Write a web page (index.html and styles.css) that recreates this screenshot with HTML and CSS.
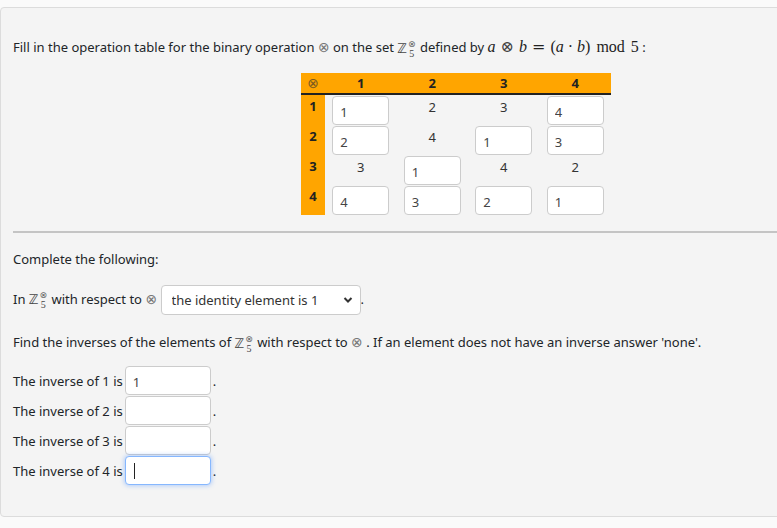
FILE: index.html
```html
<!DOCTYPE html>
<html lang="en">
<head>
    <meta charset="UTF-8">
    <title>Operation table</title>
    <link rel="stylesheet" href="styles.css">
</head>
<body>
    <div class="question">
        <p class="intro">
            Fill in the operation table for the binary operation <span class="op">&#8855;</span> on the set
            <span class="math set">&#8484;<span class="scripts"><span class="sup">&#8855;</span><span class="sub">5</span></span></span>
            defined by
            <span class="math"><i>a</i> <span class="mop">&#8855;</span> <i>b</i> <span class="mrel">=</span> (<i>a</i> <span class="mdot">&middot;</span> <i>b</i>) <span class="mod">mod</span> 5</span> :
        </p>

        <table class="optable">
            <thead>
                <tr>
                    <th class="corner">&#8855;</th>
                    <th>1</th>
                    <th>2</th>
                    <th>3</th>
                    <th>4</th>
                </tr>
            </thead>
            <tbody>
                <tr>
                    <th>1</th>
                    <td><input class="cell-input" value="1"></td>
                    <td>2</td>
                    <td>3</td>
                    <td><input class="cell-input" value="4"></td>
                </tr>
                <tr>
                    <th>2</th>
                    <td><input class="cell-input" value="2"></td>
                    <td>4</td>
                    <td><input class="cell-input" value="1"></td>
                    <td><input class="cell-input" value="3"></td>
                </tr>
                <tr>
                    <th>3</th>
                    <td>3</td>
                    <td><input class="cell-input" value="1"></td>
                    <td>4</td>
                    <td>2</td>
                </tr>
                <tr>
                    <th>4</th>
                    <td><input class="cell-input" value="4"></td>
                    <td><input class="cell-input" value="3"></td>
                    <td><input class="cell-input" value="2"></td>
                    <td><input class="cell-input" value="1"></td>
                </tr>
            </tbody>
        </table>

        <hr class="divider">

        <p class="line">Complete the following:</p>

        <p class="identity">In <span class="math set">&#8484;<span class="scripts"><span class="sup">&#8855;</span><span class="sub">5</span></span></span> with respect to <span class="op">&#8855;</span> <span class="select-wrap"><select class="choice"><option>the identity element is 1</option></select><svg class="chevron" width="10" height="8" viewBox="0 0 10 8"><path d="M1.5 2 L5 5.5 L8.5 2" fill="none" stroke="#333" stroke-width="2"/></svg></span>.</p>

        <p class="line find">
            Find the inverses of the elements of
            <span class="math set">&#8484;<span class="scripts"><span class="sup">&#8855;</span><span class="sub">5</span></span></span>
            with respect to <span class="op">&#8855;</span> . If an element does not have an inverse answer 'none'.
        </p>

        <div class="inverses">
            <div class="inv-row">The inverse of 1 is <input class="inv-input" value="1">.</div>
            <div class="inv-row">The inverse of 2 is <input class="inv-input">.</div>
            <div class="inv-row">The inverse of 3 is <input class="inv-input">.</div>
            <div class="inv-row">The inverse of 4 is <span class="focus-wrap"><input class="inv-input focused"><span class="caret"></span></span>.</div>
        </div>
    </div>
</body>
</html>
```

FILE: styles.css
```css
html, body {
    margin: 0;
    overflow: hidden;
}

body {
    background-color: #fafafa;
    font-family: 'Noto Sans', 'Open Sans', sans-serif;
    font-size: 13px;
    color: #212529;
}

.question {
    width: 790px;
    margin-top: 7px;
    padding: 27px 12px 20px 12px;
    background-color: #f4f4f4;
    border: 1px solid #dcdcdc;
    border-radius: 4px;
    box-sizing: border-box;
    height: 510px;
}

p {
    margin: 0;
}

.intro {
    line-height: 24px;
}

.op {
    font-family: 'DejaVu Sans', sans-serif;
    font-size: 14px;
    color: #777;
}

.math {
    font-family: 'Liberation Serif', 'DejaVu Serif', serif;
    font-size: 16px;
    color: #222;
}

.math i {
    font-style: italic;
}

.mop, .mrel {
    font-family: 'DejaVu Serif', serif;
    font-size: 16px;
    margin: 0 1px;
}

.mop {
    color: #444;
}

.mod {
    margin: 0 2px;
}

.set {
    display: inline-flex;
    align-items: center;
    font-family: 'DejaVu Sans', sans-serif;
    font-size: 13px;
    color: #444;
    vertical-align: middle;
    margin-right: 1px;
}

.scripts {
    display: inline-flex;
    flex-direction: column;
    align-items: center;
    line-height: 9px;
    margin-left: 1px;
}

.scripts .sup {
    font-size: 9px;
    color: #666;
}

.scripts .sub {
    font-family: 'Liberation Serif', serif;
    font-size: 10px;
}

/* operation table */
.optable {
    border-collapse: collapse;
    margin: 12px 0 0 288px;
}

.optable thead th {
    background-color: #ffa500;
    height: 20px;
    padding: 0;
    font-weight: bold;
    color: #222;
    border-bottom: 2px solid #222;
    text-align: center;
    width: 71.5px;
}

.optable thead th.corner {
    width: 24px;
    font-weight: normal;
    font-family: 'DejaVu Sans', sans-serif;
    font-size: 14px;
    color: #7a5a20;
}

.optable tbody th {
    background-color: #ffa500;
    width: 24px;
    padding: 2px 0 0 0;
    vertical-align: top;
    font-weight: bold;
    color: #222;
}

.optable tbody td {
    height: 30px;
    padding: 0;
    vertical-align: top;
    text-align: center;
    color: #333;
    line-height: 24px;
}

.cell-input {
    display: block;
    width: 57px;
    height: 29px;
    margin: 1px auto 0 auto;
    box-sizing: border-box;
    border: 1px solid #cccccc;
    border-radius: 4px;
    background-color: white;
    padding: 3px 7px 0 7px;
    font-family: 'Noto Sans', sans-serif;
    font-size: 13px;
    color: #444;
}

.divider {
    border: none;
    border-top: 2px solid #c4c4c4;
    margin: 16px -12px 0 0;
}

.line {
    line-height: 20px;
}

.divider + .line {
    margin-top: 16px;
}

.identity {
    margin-top: 15px;
    line-height: 30px;
}

.select-wrap {
    position: relative;
    display: inline-block;
    vertical-align: middle;
    height: 30px;
}

.choice {
    appearance: none;
    -webkit-appearance: none;
    width: 200px;
    height: 30px;
    border: 1px solid #cccccc;
    border-radius: 4px;
    background-color: white;
    padding: 0 10px;
    font-family: 'Noto Sans', sans-serif;
    font-size: 13px;
    color: #333;
    vertical-align: top;
}

.chevron {
    position: absolute;
    right: 8px;
    top: 11px;
}

.find {
    margin-top: 17px;
}

.inverses {
    margin-top: 12px;
}

.inv-row {
    height: 30px;
    display: flex;
    align-items: center;
    gap: 2px;
}

.inv-input {
    width: 86px;
    height: 29px;
    box-sizing: border-box;
    border: 1px solid #cccccc;
    border-radius: 4px;
    background-color: white;
    padding: 3px 7px 0 7px;
    font-family: 'Noto Sans', sans-serif;
    font-size: 13px;
    color: #444;
}

.focus-wrap {
    position: relative;
    display: inline-block;
}

.inv-input.focused {
    border-color: #86b7fe;
    box-shadow: 0 0 4px 1px rgba(100, 160, 255, 0.45);
    outline: none;
}

.caret {
    position: absolute;
    left: 9px;
    top: 7px;
    width: 1px;
    height: 16px;
    background-color: #222;
}
```
